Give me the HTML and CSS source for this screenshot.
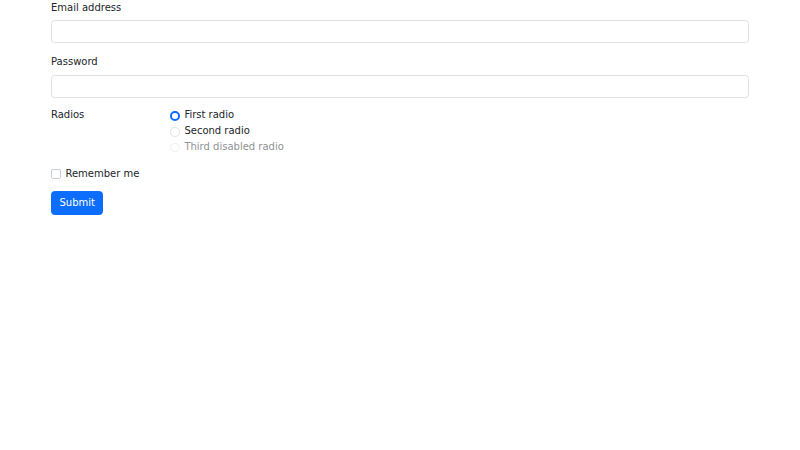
FILE: index.html
```html
<!DOCTYPE html>
<html lang="en">
<head>
<meta charset="utf-8">
<title>Form</title>
<link rel="stylesheet" href="styles.css">
</head>
<body>
<div class="container">
  <form class="form">
    <div class="group group-email">
      <label class="label label-first" for="email">Email address</label>
      <input class="control" type="email" id="email">
    </div>
    <div class="group">
      <label class="label" for="pwd">Password</label>
      <input class="control" type="password" id="pwd">
    </div>
    <div class="row group">
      <div class="legend">Radios</div>
      <div class="radios">
        <div class="check">
          <span class="radio checked"></span>
          <span class="check-label">First radio</span>
        </div>
        <div class="check">
          <span class="radio"></span>
          <span class="check-label">Second radio</span>
        </div>
        <div class="check disabled">
          <span class="radio"></span>
          <span class="check-label">Third disabled radio</span>
        </div>
      </div>
    </div>
    <div class="check group group-remember">
      <span class="box"></span>
      <span class="check-label">Remember me</span>
    </div>
    <button class="btn" type="button">Submit</button>
  </form>
</div>
</body>
</html>
```
FILE: styles.css
```css
html, body {
  margin: 0;
  padding: 0;
  background: #fff;
}
body {
  font-family: "DejaVu Sans", "Liberation Sans", sans-serif;
  font-size: 10px;
  line-height: 14.4px;
  color: #212529;
}
.container {
  width: 698px;
  margin: 0 auto;
  padding-top: 0;
}
.form {
  display: flex;
  flex-direction: column;
}
.group {
  margin-bottom: 9.6px;
}
.group-email {
  margin-bottom: 12px;
}
.label {
  display: block;
  margin-bottom: 5.5px;
}
.label-first {
  padding-top: 1px;
  margin-bottom: 4.5px;
}
.control {
  display: block;
  box-sizing: border-box;
  width: 100%;
  height: 23px;
  margin: 0;
  padding: 0 7px;
  border: 1px solid #dee2e6;
  border-radius: 3.6px;
  background: #fff;
  font: inherit;
  outline: none;
}
.row {
  display: flex;
  padding-top: 1px;
}
.legend {
  width: 119px;
  flex: none;
}
.radios {
  display: flex;
  flex-direction: column;
}
.check {
  display: flex;
  align-items: flex-start;
  min-height: 14.4px;
  margin-bottom: 1.5px;
}
.radio, .box {
  box-sizing: border-box;
  width: 9.6px;
  height: 9.6px;
  margin-top: 2.6px;
  margin-right: 4.8px;
  border: 1px solid #dee2e6;
  background: #fff;
  flex: none;
}
.radio {
  border-radius: 50%;
}
.radio.checked {
  border: 2.9px solid #0d6efd;
  background: #fff;
}
.box {
  border-radius: 2px;
  border-color: #c9ced3;
}
.disabled .radio {
  border-color: #eef0f2;
}
.disabled .check-label {
  color: #909294;
}
.group-remember {
  margin-top: 1px;
  margin-bottom: 10px;
}
.btn {
  align-self: flex-start;
  box-sizing: border-box;
  height: 24px;
  padding: 0 7.5px;
  border: 1px solid #0d6efd;
  border-radius: 3.6px;
  background: #0d6efd;
  color: #fff;
  font: inherit;
  cursor: pointer;
}
```
